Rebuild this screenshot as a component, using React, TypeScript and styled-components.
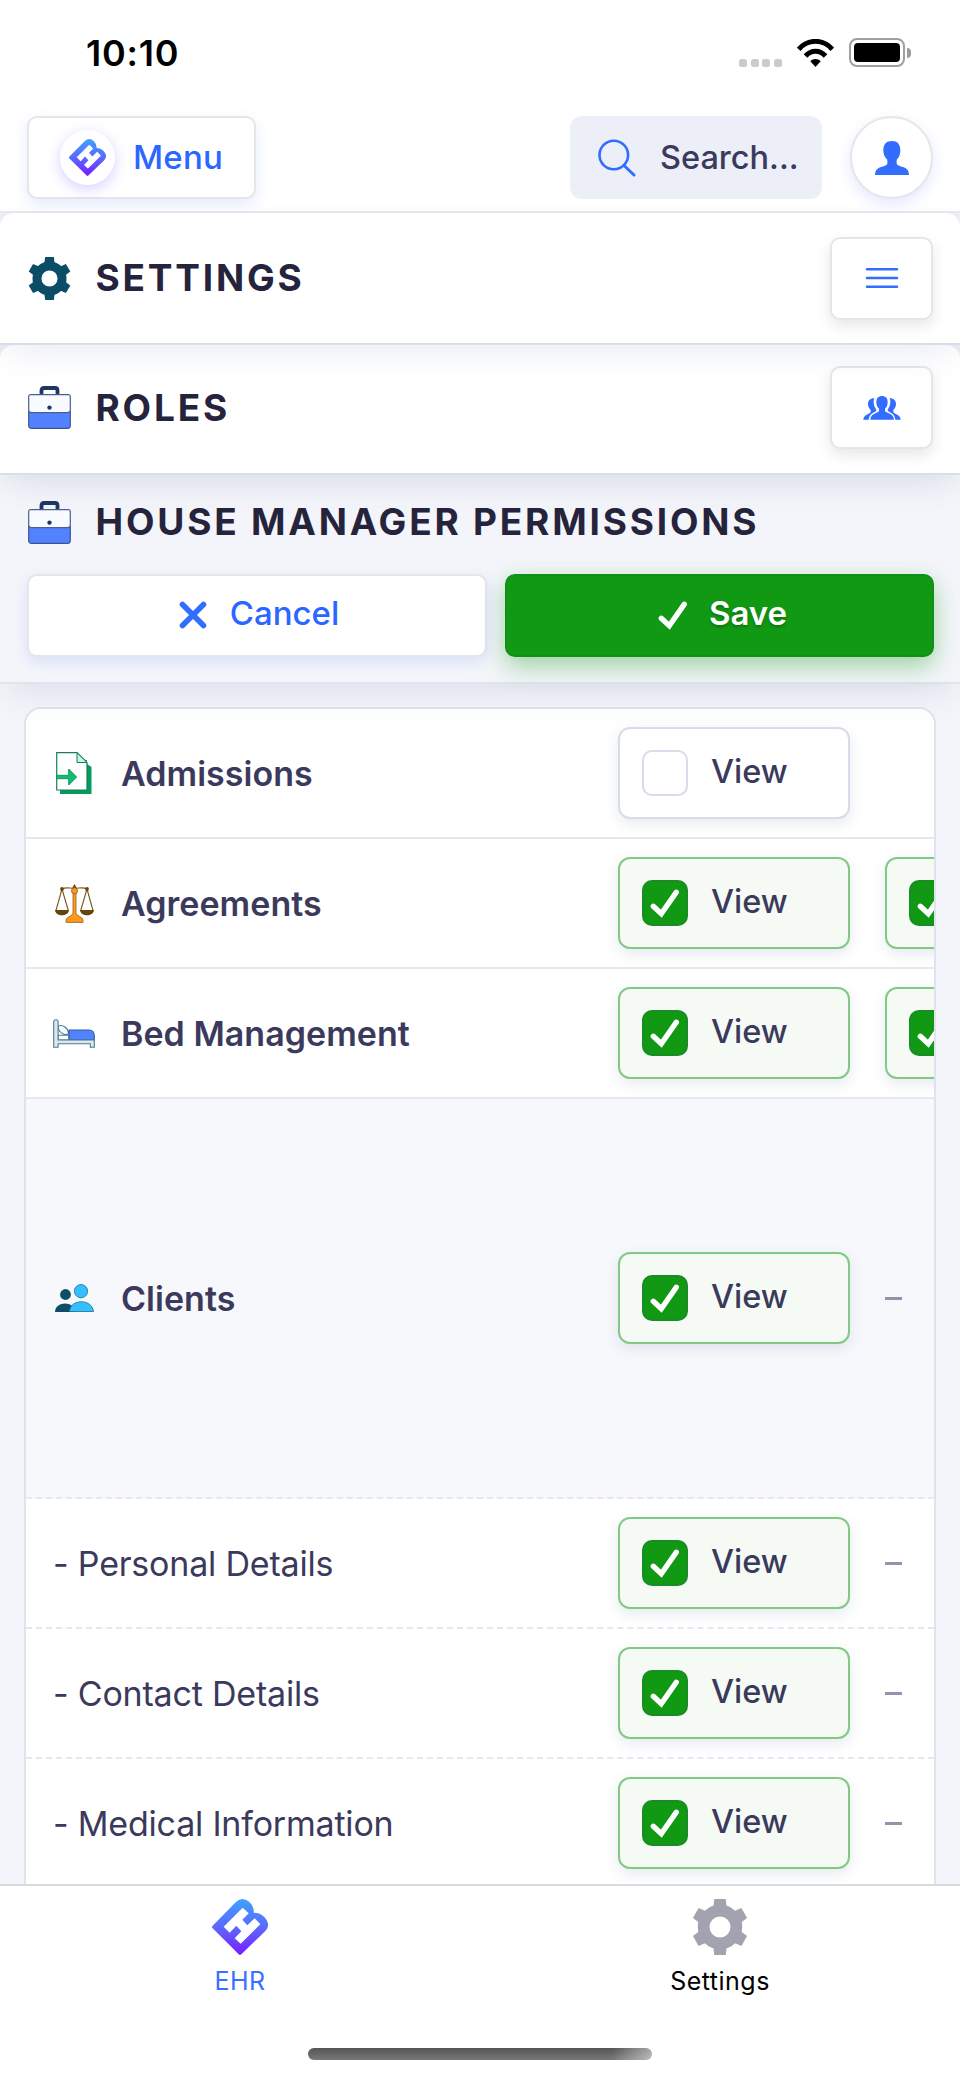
import React from 'react';
import styled, { createGlobalStyle, css } from 'styled-components';

const GlobalStyle = createGlobalStyle`
  *, *::before, *::after { box-sizing: border-box; }
  body {
    margin: 0;
    background: #f4f5fa;
    font-family: Inter, "Liberation Sans", sans-serif;
    color: #3b3a5c;
  }
  svg { display: block; flex: none; }
`;

const Screen = styled.div`
  width: 960px;
  height: 2078px;
  display: flex;
  flex-direction: column;
  overflow: hidden;
`;

const StatusBar = styled.div`
  flex: none;
  height: 105px;
  padding: 0 49px 0 86px;
  display: flex;
  align-items: center;
  justify-content: space-between;
  background: #fff;
`;

const Clock = styled.span`
  font-size: 36px;
  font-weight: 600;
  line-height: 40px;
  letter-spacing: 0.8px;
  color: #000;
`;

const StatusIcons = styled.div`
  display: flex;
  align-items: center;
`;

const SignalDots = styled.div`
  display: flex;
  gap: 3.6px;
  margin: 20px 15px 0 0;
  i {
    width: 8px;
    height: 8px;
    border-radius: 2.5px;
    background: #cbcbcb;
  }
`;

const Battery = styled.div`
  display: flex;
  align-items: center;
  gap: 2px;
  margin-left: 15px;
`;

const BatteryShell = styled.div`
  width: 56px;
  height: 29px;
  padding: 3px;
  border: 2px solid #a0a0a0;
  border-radius: 8px;
  &::after {
    content: '';
    display: block;
    height: 100%;
    border-radius: 4px;
    background: #000;
  }
`;

const BatteryCap = styled.div`
  width: 4px;
  height: 10px;
  border-radius: 0 4px 4px 0;
  background: #9c9c9c;
`;

const AppHeader = styled.header`
  flex: none;
  height: 108px;
  padding: 11px 27px 0;
  display: flex;
  align-items: flex-start;
  background: #fff;
  border-bottom: 2px solid #e5e9f0;
`;

const buttonFrame = css`
  display: flex;
  align-items: center;
  background: #fff;
  border: 2px solid #e5e6e8;
  border-radius: 10px;
`;

const MenuButton = styled.div`
  ${buttonFrame}
  width: 229px;
  height: 83px;
  padding-left: 31px;
  gap: 18px;
  font-size: 33px;
  font-weight: 500;
  letter-spacing: 0.2px;
  color: #2a66ff;
  box-shadow: 0 5px 14px rgba(50, 100, 255, 0.13);
  > span { padding-bottom: 2px; }
`;

const LogoBadge = styled.div`
  width: 55px;
  height: 55px;
  border-radius: 50%;
  display: flex;
  align-items: center;
  justify-content: center;
  background: #fff;
  box-shadow: 0 4px 14px rgba(100, 50, 255, 0.24);
`;

const SearchBox = styled.div`
  width: 252px;
  height: 83px;
  margin-left: auto;
  padding-left: 28px;
  display: flex;
  align-items: center;
  gap: 24px;
  border-radius: 12px;
  background: #eceff8;
  font-size: 32.5px;
  font-weight: 500;
  span { padding-bottom: 1px; }
`;

const Avatar = styled.div`
  ${buttonFrame}
  justify-content: center;
  width: 83px;
  height: 83px;
  margin-left: 28px;
  border-radius: 50%;
  box-shadow: 0 5px 14px rgba(50, 100, 255, 0.14);
`;

const Stack = styled.div`
  flex: none;
  position: relative;
  z-index: 1;
  background: #edf0f6;
`;

const SectionBar = styled.section<{ $level: number; $height: number; $lift?: number; $shade: number }>`
  position: relative;
  z-index: ${(p) => p.$level};
  height: ${(p) => p.$height}px;
  padding: 0 27px ${(p) => p.$lift ?? 0}px;
  display: flex;
  align-items: center;
  justify-content: space-between;
  background: #fff;
  border-bottom: 2px solid #d9deea;
  border-radius: 14px 14px 0 0;
  box-shadow: 0 12px 34px -8px rgba(70, 95, 145, ${(p) => p.$shade});
`;

const EditBar = styled.section`
  position: relative;
  height: 209px;
  padding: 25px 26px 0 27px;
  background: #f4f5fa;
  border-bottom: 2px solid #dfe3ea;
  box-shadow: 0 12px 34px -8px rgba(70, 90, 150, 0.16);
`;

const Title = styled.h2`
  margin: 0 0 0 1px;
  display: flex;
  align-items: center;
  gap: 24.5px;
  font-size: 37px;
  line-height: 44px;
  font-weight: 700;
  letter-spacing: 2.8px;
  white-space: nowrap;
  color: #25243c;
`;

const SquareButton = styled.div`
  ${buttonFrame}
  justify-content: center;
  width: 103px;
  height: 83px;
  box-shadow: 0 6px 14px rgba(40, 40, 60, 0.11);
`;

const Actions = styled.div`
  display: flex;
  gap: 18px;
  margin-top: 29.5px;
`;

const ActionButton = styled.div<{ $primary?: boolean }>`
  ${buttonFrame}
  justify-content: center;
  width: ${(p) => (p.$primary ? 429 : 460)}px;
  height: 83px;
  padding-left: 4px;
  gap: 23px;
  font-size: 33px;
  font-weight: 500;
  color: #2a66ff;
  box-shadow: 0 5px 14px rgba(50, 100, 255, 0.14);
  span { padding-bottom: 4px; }
  ${(p) =>
    p.$primary &&
    css`
      padding-left: 6px;
      gap: 21px;
      font-weight: 600;
      color: #fff;
      background: #119913;
      border-color: #128f1a;
      text-shadow: 0 2px 3px rgba(0, 0, 0, 0.25);
      box-shadow: 0 9px 24px rgba(17, 153, 19, 0.38);
    `}
`;

const Content = styled.main`
  flex: 1;
  min-height: 0;
  padding: 23px 24px 0;
  overflow: hidden;
`;

const PermissionCard = styled.div`
  border: 2px solid #dfe3ec;
  border-radius: 17px 17px 0 0;
  overflow: hidden;
  background: #fff;
`;

const Row = styled.div<{ $tall?: boolean; $dashed?: boolean }>`
  height: ${(p) => (p.$tall ? 400 : 130)}px;
  padding-left: 27px;
  display: flex;
  align-items: center;
  background: ${(p) => (p.$tall ? '#f7f8fc' : '#fff')};
  border-bottom: 2px ${(p) => (p.$dashed ? 'dashed' : 'solid')} #e6e8f1;
`;

const RowName = styled.div<{ $child?: boolean }>`
  flex: none;
  width: 565px;
  display: flex;
  align-items: center;
  font-size: 34px;
  font-weight: ${(p) => (p.$child ? 400 : 600)};
  letter-spacing: ${(p) => (p.$child ? -0.2 : 0.03)}px;
  white-space: nowrap;
`;

const IconSlot = styled.span`
  flex: none;
  width: 42px;
  margin-right: 26px;
  display: flex;
  justify-content: center;
`;

const Toggle = styled.div<{ $checked?: boolean }>`
  flex: none;
  width: 232px;
  height: 92px;
  margin-right: 35px;
  padding-left: 22px;
  display: flex;
  align-items: center;
  gap: 23px;
  border: 2px solid ${(p) => (p.$checked ? '#82ca84' : '#d8dce8')};
  border-radius: 12px;
  background: ${(p) => (p.$checked ? '#f5faf5' : '#fff')};
  box-shadow: 0 5px 14px rgba(60, 80, 130, 0.12);
  font-size: 32.5px;
  font-weight: 500;
  span { padding-bottom: 4px; }
`;

const CheckMark = styled.div<{ $checked?: boolean }>`
  flex: none;
  width: 46px;
  height: 46px;
  display: flex;
  align-items: center;
  justify-content: center;
  border: 2px solid ${(p) => (p.$checked ? '#1a8c26' : '#d8dce8')};
  border-radius: 10px;
  background: ${(p) => (p.$checked ? '#119913' : '#fff')};
`;

const NoOption = styled.div`
  width: 17px;
  height: 3px;
  background: #9593ab;
`;

const TabBar = styled.nav`
  flex: none;
  position: relative;
  z-index: 2;
  height: 194px;
  display: grid;
  grid-template-columns: 1fr 1fr;
  grid-template-rows: 162px auto;
  background: #fff;
  border-top: 2px solid #d9dbdd;
`;

const Tab = styled.div<{ $active?: boolean }>`
  padding-top: 13px;
  display: flex;
  flex-direction: column;
  align-items: center;
  gap: 11px;
  font-size: 25px;
  line-height: 30px;
  letter-spacing: 0.5px;
  color: ${(p) => (p.$active ? '#3a70ff' : '#000')};
`;

const HomeIndicator = styled.div`
  grid-column: 1 / -1;
  justify-self: center;
  width: 344px;
  height: 12px;
  border-radius: 6px;
  background:
    linear-gradient(100deg, transparent 88%, rgba(255, 255, 255, 0.5) 100%),
    linear-gradient(#555, #787878);
`;

function Logo({ size, id }: { size: number; id: string }) {
  return (
    <svg width={size} height={size} viewBox="0 0 168 168">
      <defs>
        <linearGradient id={id} x1="0" y1="0" x2="0" y2="1">
          <stop offset="0" stopColor="#3fa2ff" />
          <stop offset="0.5" stopColor="#5a69ff" />
          <stop offset="1" stopColor="#7a1cff" />
        </linearGradient>
      </defs>
      <path
        fill={`url(#${id})`}
        fillRule="evenodd"
        d="M2 80 L71 10 Q91 -9 112 9 Q127 23 125 41 Q143 40 157 54 Q178 76 160 96 L88 166 Q84 170 80 166 L2 88 Q-2 84 2 80 Z M92 26 L35 83 L53 101 L73 80 L88 97 L68 118 L86 134 L145 76 L128 58 L106 79 L91 62 L110 43 Z"
      />
    </svg>
  );
}

function Gear({ size, color }: { size: number; color: string }) {
  return (
    <svg width={size} height={size} viewBox="0 0 168 168">
      <circle cx="84" cy="84" r="49" fill="none" stroke={color} strokeWidth="35" />
      {[0, 60, 120, 180, 240, 300].map((a) => (
        <path key={a} d="M67 0 H101 L105 32 H63 Z" fill={color} transform={`rotate(${a} 84 84)`} />
      ))}
    </svg>
  );
}

const Briefcase = () => (
  <svg width="43" height="43" viewBox="0 0 43 43">
    <path d="M13.5 9 V4.5 Q13.5 2 16 2 H27 Q29.5 2 29.5 4.5 V9" fill="none" stroke="#1e3568" strokeWidth="3.8" />
    <rect x="0.7" y="24" width="41.6" height="18.3" rx="2.5" fill="#5282ff" stroke="#3e5590" strokeWidth="1.2" />
    <path d="M2.5 8.6 H40.5 Q42.3 8.6 42.3 10.5 V24 Q42.3 26.6 39.5 26.6 H3.5 Q0.7 26.6 0.7 24 V10.5 Q0.7 8.6 2.5 8.6 Z" fill="#f8fbff" stroke="#4a5f8e" strokeWidth="1.2" />
    <circle cx="21.5" cy="21.6" r="2.2" fill="#1e3568" />
  </svg>
);

const SearchIcon = () => (
  <svg width="38" height="38" viewBox="0 0 38 38" fill="none" stroke="#336dff" strokeLinecap="round">
    <circle cx="15.8" cy="16" r="14.3" strokeWidth="2.6" />
    <path d="M26 26.5 L36 36" strokeWidth="3" />
  </svg>
);

const UserIcon = () => (
  <svg width="34" height="34" viewBox="0 0 102 102">
    <path
      fill="#336dff"
      d="M51 0 C67 0 76 10 76 27 C76 42 71 50 65 56 V69 C70 75 78 76 86 79 C97 83 101 90 102 102 H0 C1 90 5 83 16 79 C24 76 32 75 37 69 V56 C31 50 25 42 25 27 C25 10 34 0 51 0 Z"
    />
  </svg>
);

const GroupIcon = () => (
  <svg width="38" height="24" viewBox="0 0 112 72" fill="#336dff">
    <path d="M56 0 C67 0 73 7 73 18 C73 28 70 34 65 38 V45 C71 53 91 52 92 71 H21 C22 52 41 53 47 45 V38 C42 34 39 28 39 18 C39 7 45 0 56 0 Z" />
    <path d="M33 7 C28 18 33 34 39 41 V44 C31 50 18 53 16 71 H0 C1 56 16 56 22 49 V42 C17 37 14 32 14 24 C14 13 22 6 33 7 Z" />
    <path d="M79 7 C84 18 79 34 73 41 V44 C81 50 94 53 96 71 H112 C111 56 96 56 90 49 V42 C95 37 98 32 98 24 C98 13 90 6 79 7 Z" />
  </svg>
);

const MenuLines = () => (
  <svg width="34" height="22" viewBox="0 0 34 22" stroke="#336dff" strokeWidth="2.5" strokeLinecap="round">
    <path d="M2 2.3 H32 M2 11 H32 M2 19.7 H32" />
  </svg>
);

const CrossIcon = () => (
  <svg width="28" height="28" viewBox="0 0 28 28" stroke="#336dff" strokeWidth="5.6" strokeLinecap="round">
    <path d="M3.5 3.5 L24.5 24.5 M24.5 3.5 L3.5 24.5" />
  </svg>
);

const Tick = () => (
  <svg width="30" height="29" viewBox="0 0 30 29">
    <path d="M3.3 17.3 L11.3 24.7 L26.3 3.3" fill="none" stroke="#fff" strokeWidth="5.4" strokeLinecap="round" />
  </svg>
);

const WifiIcon = () => (
  <svg width="37" height="28" viewBox="0 0 38 28" preserveAspectRatio="none" fill="none" stroke="#000">
    <path d="M1.8 10.3 C11 -0.3 27 -0.3 36.2 10.3" strokeWidth="5" />
    <path d="M8.7 17 C14.5 10.5 23.5 10.5 29.3 17" strokeWidth="5" />
    <path d="M19 28 L13.7 22.3 C16.5 19.3 21.5 19.3 24.3 22.3 Z" fill="#000" stroke="none" />
  </svg>
);

const AdmissionIcon = () => (
  <svg width="36" height="42" viewBox="0 0 36 42">
    <path d="M4 8 H31 V12 L35.5 15 V42 H4 Z" fill="#069b5c" />
    <path d="M0.7 0.7 H21 L31 10.5 V38 H0.7 Z" fill="#fff" stroke="#17805a" strokeWidth="1.2" />
    <path d="M21 0.7 L31 10.5 H21 Z" fill="#c6f5dd" stroke="#17805a" strokeWidth="1" />
    <path d="M0.7 23.3 H12.7 V17 L20.7 25 L12.7 33 V26.7 H0.7 Z" fill="#0dbd72" stroke="#12915b" strokeWidth="0.9" />
  </svg>
);

const ScalesIcon = () => (
  <svg width="39" height="39" viewBox="0 0 39 39">
    <g fill="none" stroke="#7a571c" strokeWidth="1.1">
      <path d="M7 5 C12 2.5 14 4.5 19.5 4.5 C25 4.5 27 2.5 32 5" />
      <path d="M7 5 L1 26.5 M7 5 L13.3 26.5 M32 5 L25.7 26.5 M32 5 L38 26.5" />
    </g>
    <path d="M0 26 H14 C13.5 33 0.5 33 0 26 Z M25 26 H39 C38.5 33 25.5 33 25 26 Z" fill="#654509" />
    <circle cx="7" cy="5" r="1.9" fill="#654509" />
    <circle cx="32" cy="5" r="1.9" fill="#654509" />
    <path d="M19.5 0 L22 4.5 H17 Z" fill="#654509" />
    <path d="M18 7 H21 V30 L27.5 34.5 Q28.3 36 28 38.4 H11 Q10.7 36 11.5 34.5 L18 30 Z" fill="#ff981d" stroke="#a8691a" strokeWidth="0.9" />
    <circle cx="19.5" cy="6.8" r="3" fill="#ff981d" stroke="#9b621c" strokeWidth="0.9" />
  </svg>
);

const BedIcon = () => (
  <svg width="42" height="29" viewBox="0 0 42 29" stroke="#4a7c91" strokeWidth="1.1">
    <path d="M5.2 7 C10 5 15 9 15.7 14.5 C13 16.7 7.5 15 5.2 10 Z" fill="#f7fcff" />
    <path d="M5.2 16.3 H16 V21 H5.2 Z" fill="#fff" />
    <path d="M16 11 H36 Q41.3 11 41.3 17 V21 H16 Z" fill="#5282ff" stroke="#2f5f9e" />
    <path d="M0.7 2.8 Q0.7 0.8 2.9 0.8 Q5.1 0.8 5.1 2.8 V21 H41.3 V28.3 H37.3 V24.8 H5.1 V28.3 H0.7 Z" fill="#e0e7ec" />
  </svg>
);

const ClientsIcon = () => (
  <svg width="39" height="28" viewBox="0 0 39 28">
    <circle cx="10.5" cy="10.5" r="5.4" fill="#0e4d68" />
    <path d="M0 28 C0 16.5 20 16.5 20 28 Z" fill="#0e4d68" />
    <circle cx="26" cy="7.2" r="6.6" fill="#36bfff" stroke="#1f7ba3" strokeWidth="0.9" />
    <path d="M14.5 27.5 C15.5 14.5 37 14.5 38.5 27.5 Z" fill="#36bfff" stroke="#1f7ba3" strokeWidth="0.9" />
  </svg>
);

type Cell = 'off' | 'on' | 'none';

interface Permission {
  name: string;
  icon?: React.ReactNode;
  cells: Cell[];
  tall?: boolean;
  dashed?: boolean;
}

const permissions: Permission[] = [
  { name: 'Admissions', icon: <AdmissionIcon />, cells: ['off'] },
  { name: 'Agreements', icon: <ScalesIcon />, cells: ['on', 'on'] },
  { name: 'Bed Management', icon: <BedIcon />, cells: ['on', 'on'] },
  { name: 'Clients', icon: <ClientsIcon />, cells: ['on', 'none'], tall: true, dashed: true },
  { name: '- Personal Details', cells: ['on', 'none'], dashed: true },
  { name: '- Contact Details', cells: ['on', 'none'], dashed: true },
  { name: '- Medical Information', cells: ['on', 'none'], dashed: true },
];

function PermissionCell({ state }: { state: Cell }) {
  if (state === 'none') return <NoOption />;
  const checked = state === 'on';
  return (
    <Toggle $checked={checked}>
      <CheckMark $checked={checked}>{checked && <Tick />}</CheckMark>
      <span>View</span>
    </Toggle>
  );
}

export default function App() {
  return (
    <>
      <GlobalStyle />
      <Screen>
        <StatusBar>
          <Clock>10:10</Clock>
          <StatusIcons>
            <SignalDots><i /><i /><i /><i /></SignalDots>
            <WifiIcon />
            <Battery><BatteryShell /><BatteryCap /></Battery>
          </StatusIcons>
        </StatusBar>
        <AppHeader>
          <MenuButton>
            <LogoBadge><Logo size={37} id="menu-logo" /></LogoBadge>
            <span>Menu</span>
          </MenuButton>
          <SearchBox><SearchIcon /><span>Search...</span></SearchBox>
          <Avatar><UserIcon /></Avatar>
        </AppHeader>
        <Stack>
          <SectionBar $level={3} $height={132} $shade={0.14}>
            <Title><Gear size={43} color="#0b4c66" />SETTINGS</Title>
            <SquareButton><MenuLines /></SquareButton>
          </SectionBar>
          <SectionBar $level={2} $height={130} $lift={3} $shade={0.19}>
            <Title><Briefcase />ROLES</Title>
            <SquareButton><GroupIcon /></SquareButton>
          </SectionBar>
          <EditBar>
            <Title><Briefcase />HOUSE MANAGER PERMISSIONS</Title>
            <Actions>
              <ActionButton><CrossIcon /><span>Cancel</span></ActionButton>
              <ActionButton $primary><Tick /><span>Save</span></ActionButton>
            </Actions>
          </EditBar>
        </Stack>
        <Content>
          <PermissionCard>
            {permissions.map((p) => (
              <Row key={p.name} $tall={p.tall} $dashed={p.dashed}>
                <RowName $child={!p.icon}>
                  {p.icon && <IconSlot>{p.icon}</IconSlot>}
                  {p.name}
                </RowName>
                {p.cells.map((c, i) => <PermissionCell key={i} state={c} />)}
              </Row>
            ))}
          </PermissionCard>
        </Content>
        <TabBar>
          <Tab $active><Logo size={56} id="tab-logo" />EHR</Tab>
          <Tab><Gear size={56} color="#a3a3af" />Settings</Tab>
          <HomeIndicator />
        </TabBar>
      </Screen>
    </>
  );
}
